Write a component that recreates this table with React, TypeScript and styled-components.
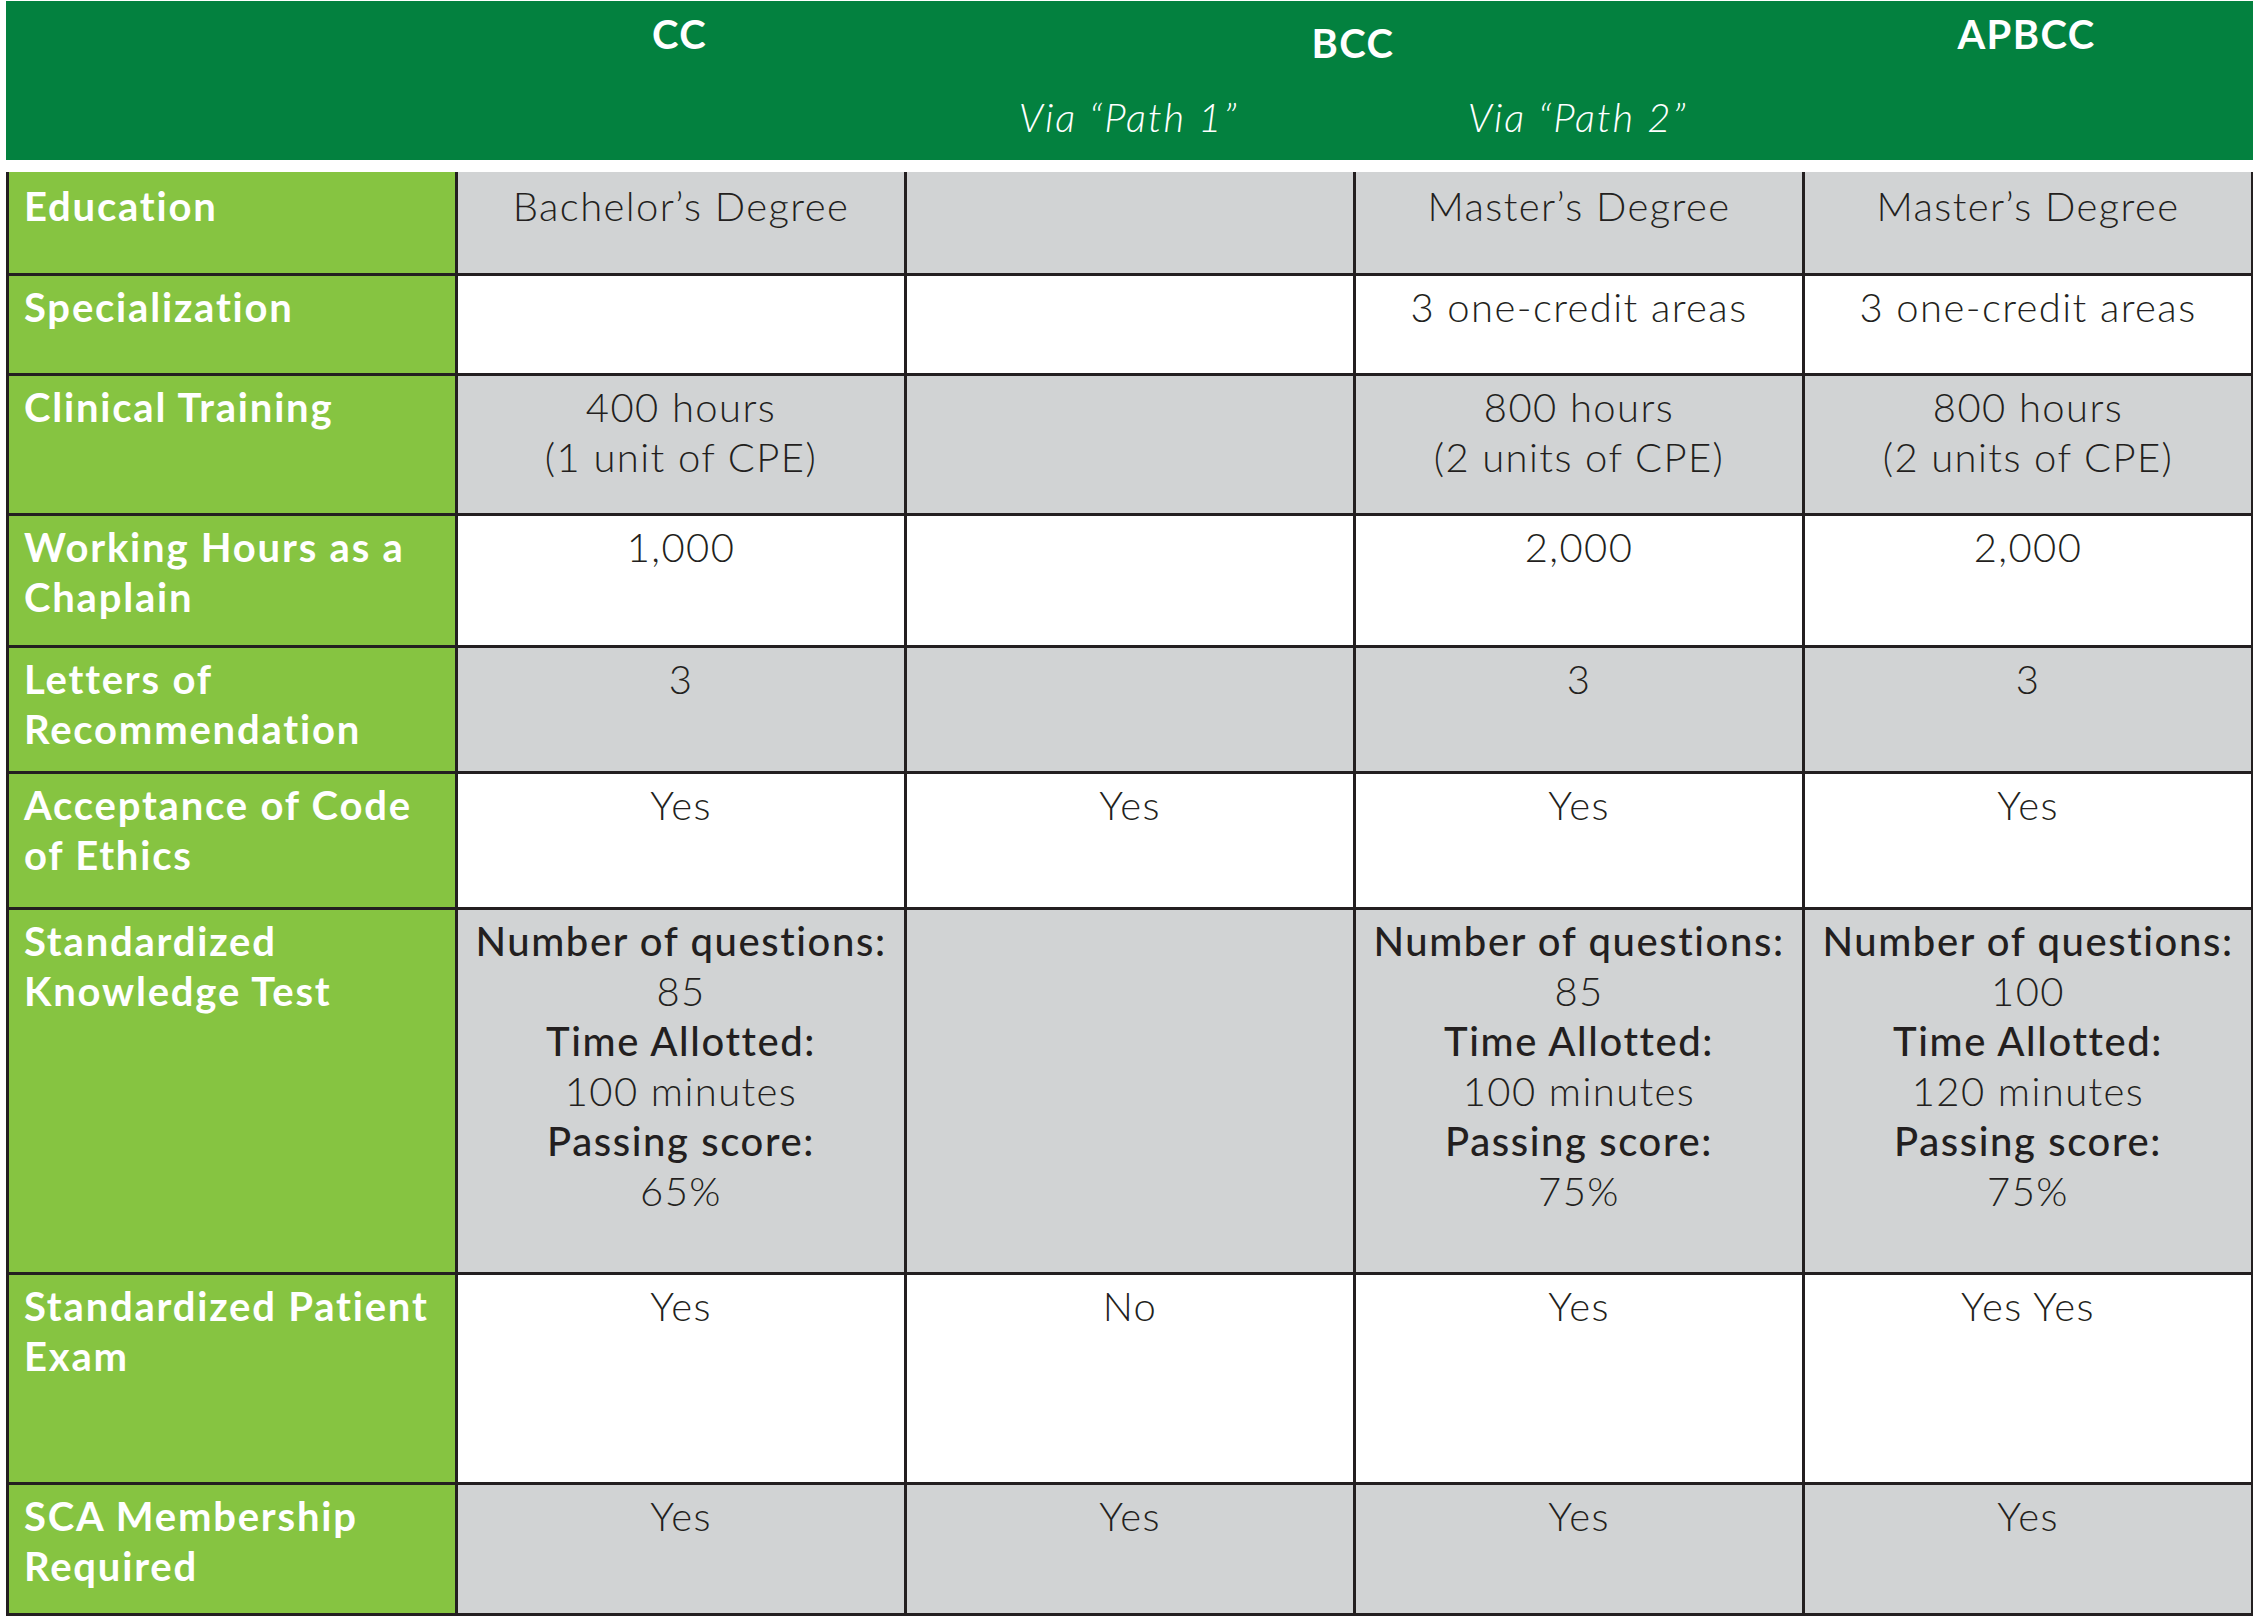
import React from "react";
import styled, { createGlobalStyle } from "styled-components";

const GlobalStyle = createGlobalStyle`
    html, body {
        margin: 0;
        padding: 0;
        background: #ffffff;
    }
    body {
        font-family: Lato, "Open Sans", sans-serif;
        color: #231f20;
    }
`;

const COL = 449;

const Page = styled.div`
    width: 2253px;
    padding: 1px 0 0 6px;
    box-sizing: border-box;
`;

const Header = styled.div`
    display: grid;
    grid-template-columns: repeat(5, ${COL}px) 1fr;
    grid-template-rows: 50px 50px;
    row-gap: 33px;
    height: 159px;
    padding-top: 8px;
    box-sizing: border-box;
    background: #03813f;
    color: #ffffff;
`;

const Title = styled.div<{ $col: string; $drop?: number }>`
    grid-column: ${(p) => p.$col};
    grid-row: 1;
    padding-top: ${(p) => p.$drop || 0}px;
    text-align: center;
    font-size: 40px;
    line-height: 50px;
    font-weight: 700;
    letter-spacing: 1.4px;
`;

const Via = styled.div<{ $col: number }>`
    grid-column: ${(p) => p.$col};
    grid-row: 2;
    text-align: center;
    font-size: 40px;
    line-height: 50px;
    font-weight: 300;
    font-style: italic;
    letter-spacing: 2px;
`;

const Table = styled.table`
    margin-top: 12px;
    width: ${COL * 5}px;
    table-layout: fixed;
    border-collapse: collapse;
    border: 3px solid #231f20;
    border-top: none;
`;

const Row = styled.tr<{ $h: number; $shade: boolean }>`
    height: ${(p) => p.$h}px;
    background: ${(p) => (p.$shade ? "#d1d3d4" : "#ffffff")};

    &:first-child td,
    &:first-child th {
        border-top: none;
        padding-top: 9px;
    }
`;

const Label = styled.th`
    background: #86c441;
    color: #ffffff;
    border: 3px solid #231f20;
    padding: 6px 0 0 15px;
    vertical-align: top;
    text-align: left;
    font-size: 40px;
    line-height: 50px;
    font-weight: 700;
    letter-spacing: 1.8px;
    white-space: nowrap;
`;

const Cell = styled.td`
    border: 3px solid #231f20;
    padding: 6px 0 0 0;
    vertical-align: top;
    text-align: center;
    font-size: 40px;
    line-height: 50px;
    font-weight: 300;
    letter-spacing: 1.4px;
    white-space: nowrap;
`;

const Line = styled.div<{ $strong?: boolean }>`
    font-weight: ${(p) => (p.$strong ? 500 : 300)};
    letter-spacing: ${(p) => (p.$strong ? 1.6 : 1.4)}px;
`;

type Entry = string | { text: string; strong?: boolean }[];

interface RowData {
    label: string[];
    height: number;
    cells: Entry[];
}

const lines = (...items: string[]) => items.map((text) => ({ text }));

const test = (count: string, minutes: string, score: string) => [
    { text: "Number of questions:", strong: true },
    { text: count },
    { text: "Time Allotted:", strong: true },
    { text: minutes },
    { text: "Passing score:", strong: true },
    { text: score }
];

const rows: RowData[] = [
    {
        label: ["Education"],
        height: 102,
        cells: ["Bachelor’s Degree", "", "Master’s Degree", "Master’s Degree"]
    },
    {
        label: ["Specialization"],
        height: 100,
        cells: ["", "", "3 one-credit areas", "3 one-credit areas"]
    },
    {
        label: ["Clinical Training"],
        height: 140,
        cells: [
            lines("400 hours", "(1 unit of CPE)"),
            "",
            lines("800 hours", "(2 units of CPE)"),
            lines("800 hours", "(2 units of CPE)")
        ]
    },
    {
        label: ["Working Hours as a", "Chaplain"],
        height: 132,
        cells: ["1,000", "", "2,000", "2,000"]
    },
    {
        label: ["Letters of", "Recommendation"],
        height: 126,
        cells: ["3", "", "3", "3"]
    },
    {
        label: ["Acceptance of Code", "of Ethics"],
        height: 136,
        cells: ["Yes", "Yes", "Yes", "Yes"]
    },
    {
        label: ["Standardized", "Knowledge Test"],
        height: 365,
        cells: [test("85", "100 minutes", "65%"), "", test("85", "100 minutes", "75%"), test("100", "120 minutes", "75%")]
    },
    {
        label: ["Standardized Patient", "Exam"],
        height: 210,
        cells: ["Yes", "No", "Yes", "Yes Yes"]
    },
    {
        label: ["SCA Membership", "Required"],
        height: 131,
        cells: ["Yes", "Yes", "Yes", "Yes"]
    }
];

const CellContent = ({ entry }: { entry: Entry }) => {
    if (typeof entry === "string") {
        return <>{entry}</>;
    }
    return (
        <>
            {entry.map((line, i) => (
                <Line key={i} $strong={line.strong}>
                    {line.text}
                </Line>
            ))}
        </>
    );
};

export default function App() {
    return (
        <Page>
            <GlobalStyle />
            <Header>
                <Title $col="2">CC</Title>
                <Title $col="3 / 5" $drop={9}>
                    BCC
                </Title>
                <Title $col="5">APBCC</Title>
                <Via $col={3}>Via “Path 1”</Via>
                <Via $col={4}>Via “Path 2”</Via>
            </Header>
            <Table>
                <colgroup>
                    <col style={{ width: COL }} />
                    <col style={{ width: COL }} />
                    <col style={{ width: COL }} />
                    <col style={{ width: COL }} />
                    <col style={{ width: COL }} />
                </colgroup>
                <tbody>
                    {rows.map((row, r) => (
                        <Row key={r} $h={row.height} $shade={r % 2 === 0}>
                            <Label>
                                {row.label.map((text, i) => (
                                    <div key={i}>{text}</div>
                                ))}
                            </Label>
                            {row.cells.map((entry, c) => (
                                <Cell key={c}>
                                    <CellContent entry={entry} />
                                </Cell>
                            ))}
                        </Row>
                    ))}
                </tbody>
            </Table>
        </Page>
    );
}
